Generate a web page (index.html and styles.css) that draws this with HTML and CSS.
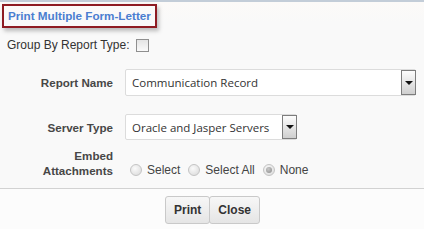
FILE: index.html
```html
<!DOCTYPE html>
<html lang="en">
<head>
    <meta charset="UTF-8">
    <title>Print Multiple Form-Letter</title>
    <link rel="stylesheet" href="styles.css">
</head>
<body>
    <div class="topbar"></div>
    <div class="dialog">
        <div class="title-wrap">
            <span class="title">Print Multiple Form-Letter</span>
        </div>
        <div class="group-row">
            <label for="groupBy">Group By Report Type:</label>
            <span class="checkbox" id="groupBy"></span>
        </div>
        <div class="form-grid">
            <div class="label">Report Name</div>
            <div class="select wide">
                <span class="select-value">Communication Record</span>
                <span class="select-btn"><span class="arrow"></span></span>
            </div>

            <div class="label">Server Type</div>
            <div class="select narrow">
                <span class="select-value">Oracle and Jasper Servers</span>
                <span class="select-btn"><span class="arrow"></span></span>
            </div>
        </div>
        <div class="form-grid embed-row">
            <div class="label two-line">Embed<br>Attachments</div>
            <div class="radios">
                <span class="radio-item"><span class="radio"></span>Select</span>
                <span class="radio-item"><span class="radio"></span>Select All</span>
                <span class="radio-item"><span class="radio checked"></span>None</span>
            </div>
        </div>
    </div>
    <div class="footer">
        <button class="btn">Print</button><button class="btn">Close</button>
    </div>
</body>
</html>
```

FILE: styles.css
```css
body {
    margin: 0;
    font-family: "Liberation Sans", Arial, sans-serif;
    background-color: #f9f9f9;
    color: #333;
}
.topbar {
    height: 2px;
    background-color: #c3cdd8;
}
.dialog {
    background: linear-gradient(#fcfaf8, #f9f9f9 20px);
    padding-bottom: 10px;
    border-bottom: 1px solid #d2d2d2;
}
.title-wrap {
    padding: 2px 0 0 2px;
}
.title {
    display: inline-block;
    border: 2px solid #8e1b22;
    padding: 3px 4px 3px 4px;
    line-height: 14px;
    font-size: 11.7px;
    font-weight: bold;
    color: #4a7ed0;
    box-shadow: 2px 3px 4px rgba(0, 0, 0, 0.25);
}
.group-row {
    display: flex;
    align-items: center;
    padding: 10px 0 0 7px;
    font-size: 12px;
    line-height: 14px;
}
.checkbox {
    display: inline-block;
    width: 11px;
    height: 11px;
    margin-left: 6px;
    border: 1px solid #8f8f8f;
    background: linear-gradient(#e4e4e4, #fafafa);
}
.form-grid {
    display: grid;
    grid-template-columns: 113px auto;
    column-gap: 12px;
    row-gap: 18px;
    align-items: center;
    margin-top: 17px;
}
.embed-row {
    margin-top: 8px;
}
.label {
    text-align: right;
    font-size: 11.6px;
    font-weight: bold;
    color: #474747;
}
.two-line {
    line-height: 15px;
}
.select {
    display: flex;
    align-items: center;
    height: 27px;
    box-sizing: border-box;
    border: 1px solid #dcdcdc;
    border-radius: 2px;
    background-color: #fff;
    font-family: "Open Sans", "Noto Sans", sans-serif;
    font-size: 11.5px;
    color: #333;
}
.select.wide {
    width: 291px;
}
.select.narrow {
    width: 172px;
    height: 26px;
}
.select-value {
    flex: 1;
    padding-left: 6px;
    white-space: nowrap;
}
.select-btn {
    display: flex;
    align-items: center;
    justify-content: center;
    width: 13px;
    height: calc(100% - 2px);
    margin-right: -1px;
    border: 1px solid #7d7d7d;
    background: linear-gradient(#fdfdfd, #cfcfcf);
}
.arrow {
    width: 0;
    height: 0;
    border-left: 4px solid transparent;
    border-right: 4px solid transparent;
    border-top: 4px solid #111;
}
.radios {
    display: flex;
    align-items: center;
    align-self: end;
    gap: 8px;
    margin-left: 5px;
    margin-bottom: 1px;
    font-size: 12px;
    line-height: 14px;
    color: #444;
}
.radio-item {
    display: flex;
    align-items: center;
}
.radio {
    display: inline-block;
    width: 10px;
    height: 10px;
    margin-right: 5px;
    border: 1px solid #c4c4c4;
    border-radius: 50%;
    background: radial-gradient(circle at 40% 35%, #fafafa, #d8d8d8);
    position: relative;
}
.radio.checked::after {
    content: "";
    position: absolute;
    left: 2px;
    top: 2px;
    width: 6px;
    height: 6px;
    border-radius: 50%;
    background: radial-gradient(circle at 40% 35%, #c8c8c8, #8a8a8a);
}
.footer {
    display: flex;
    justify-content: center;
    align-items: flex-start;
    padding-top: 7px;
    background-color: #fcfcfc;
    height: 34px;
}
.btn {
    height: 28px;
    padding: 0 8px;
    border: 1px solid #c9c9c9;
    border-radius: 3px;
    background: linear-gradient(#f7f7f7, #e5e5e5);
    font-family: "Liberation Sans", Arial, sans-serif;
    font-size: 12px;
    font-weight: bold;
    color: #333;
    margin-right: -1px;
}
```
